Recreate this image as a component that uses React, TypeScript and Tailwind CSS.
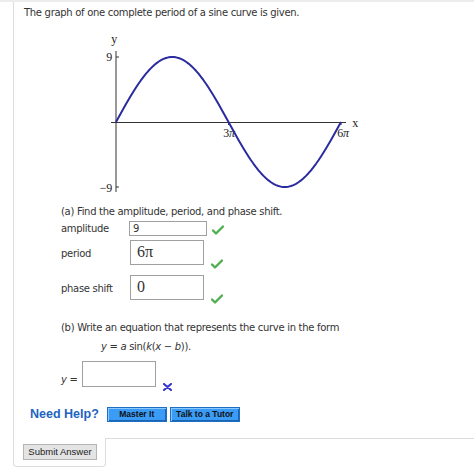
const curve = (() => {
  const pts: string[] = []
  for (let i = 0; i <= 90; i++) {
    const x = 21 + (225 * i) / 90
    const y = 92 - 65 * Math.sin((2 * Math.PI * i) / 90)
    pts.push(`${i === 0 ? 'M' : 'L'}${x.toFixed(2)},${y.toFixed(2)}`)
  }
  return pts.join(' ')
})()

function SineGraph() {
  return (
    <svg width="270" height="166" viewBox="0 0 270 166" className="block ml-[81px] mt-[10px]">
      <g fontFamily="'Liberation Serif', serif" fontSize="12" fill="#222">
        <text x="19" y="13" textAnchor="middle">y</text>
        <text x="17" y="31" textAnchor="end">9</text>
        <text x="17" y="162" textAnchor="end">−9</text>
        <text x="260" y="97" textAnchor="middle">x</text>
        <text x="134" y="107" textAnchor="middle">
          3<tspan fontStyle="italic">π</tspan>
        </text>
        <text x="248" y="107" textAnchor="middle">
          6<tspan fontStyle="italic">π</tspan>
        </text>
      </g>
      <g stroke="#333" strokeWidth="1">
        <line x1="21" y1="21" x2="21" y2="162" />
        <line x1="16" y1="92.5" x2="251" y2="92.5" />
        <line x1="21" y1="27" x2="24" y2="27" />
        <line x1="21" y1="157" x2="24" y2="157" />
        <line x1="133.5" y1="92" x2="133.5" y2="95" />
        <line x1="246" y1="92" x2="246" y2="95" />
      </g>
      <path d={curve} fill="none" stroke="#2b2ba0" strokeWidth="2" strokeLinejoin="round" />
    </svg>
  )
}

function Check() {
  return (
    <svg width="12" height="10" viewBox="0 0 12 10" className="block">
      <path d="M1 5.5 L4 8.5 L11 1.5" fill="none" stroke="#4fae4f" strokeWidth="2.4" strokeLinecap="round" strokeLinejoin="round" />
    </svg>
  )
}

function Cross() {
  return (
    <svg width="9" height="8" viewBox="0 0 9 8" className="block">
      <path d="M1 1 L8 7 M8 1 L1 7" stroke="#3838cc" strokeWidth="2.2" strokeLinecap="round" />
    </svg>
  )
}

export default function App() {
  return (
    <div className="w-[474px] h-[471px] bg-white overflow-hidden font-['DejaVu_Sans',sans-serif] text-[#333] text-[10px] tracking-[-0.3px]">
      <div className="h-[2px] bg-[#ececec]" />
      <div className="ml-[13px] h-[436px] border-l border-[#dddddd] flex flex-col">
        <p className="ml-[10px] mt-[4px] leading-[14px]">The graph of one complete period of a sine curve is given.</p>

        <SineGraph />

        <div className="ml-[47px] flex flex-col">
          <p className="mt-[9px] leading-[14px]">(a) Find the amplitude, period, and phase shift.</p>

          <div className="mt-[2px] flex items-center h-[15px]">
            <span className="w-[68px] leading-[14px]">amplitude</span>
            <div className="w-[78px] h-[15px] border border-[#a0a0a0] px-[3px] text-[10px] leading-[13px]">9</div>
            <div className="ml-[5px] mt-[2px]">
              <Check />
            </div>
          </div>

          <div className="mt-[4px] flex items-start h-[25px]">
            <span className="w-[69px] mt-[7px] leading-[14px]">period</span>
            <div className="w-[74px] h-[25px] border border-[#a0a0a0] pl-[6px] font-['Liberation_Serif',serif] text-[16px] leading-[21px] tracking-normal">
              6π
            </div>
            <div className="ml-[7px] mt-[19px]">
              <Check />
            </div>
          </div>

          <div className="mt-[10px] flex items-start h-[25px]">
            <span className="w-[69px] mt-[7px] leading-[14px]">phase shift</span>
            <div className="w-[74px] h-[25px] border border-[#a0a0a0] pl-[6px] font-['Liberation_Serif',serif] text-[16px] leading-[21px] tracking-normal">
              0
            </div>
            <div className="ml-[7px] mt-[19px]">
              <Check />
            </div>
          </div>

          <p className="mt-[21px] leading-[14px]">(b) Write an equation that represents the curve in the form</p>
          <p className="mt-[5px] ml-[40px] leading-[14px]">
            <i>y</i> = <i>a</i> sin(<i>k</i>(<i>x</i> − <i>b</i>)).
          </p>

          <div className="mt-[7px] flex items-start h-[26px]">
            <span className="w-[21px] mt-[12px] leading-[14px]">
              <i>y</i> =
            </span>
            <div className="w-[74px] h-[26px] border border-[#a0a0a0]" />
            <div className="ml-[7px] mt-[22px]">
              <Cross />
            </div>
          </div>
        </div>

        <div className="ml-[16px] mt-[19px] flex items-center tracking-normal">
          <span className="font-['Liberation_Sans',sans-serif] font-bold text-[12.5px] text-[#1d63bf] leading-[16px]">Need Help?</span>
          <button className="ml-[8px] w-[60px] h-[15px] bg-[#3a9cf7] border border-[#1d6fc6] shadow-[inset_1px_1px_0_#8cc8ff,inset_-1px_-1px_0_#1a64b0] font-['Liberation_Sans',sans-serif] font-bold text-[8.5px] text-[#111] leading-[13px]">
            Master It
          </button>
          <button className="ml-[3px] w-[70px] h-[15px] bg-[#3a9cf7] border border-[#1d6fc6] shadow-[inset_1px_1px_0_#8cc8ff,inset_-1px_-1px_0_#1a64b0] font-['Liberation_Sans',sans-serif] font-bold text-[8.5px] text-[#111] leading-[13px]">
            Talk to a Tutor
          </button>
        </div>
      </div>

      <div className="flex items-start">
        <div className="ml-[13px] w-[93px] h-[29px] border-l border-r border-b border-[#dddddd] rounded-b-[4px] pl-[9px] pt-[6px]">
          <button className="w-[74px] h-[16px] bg-[#e4e4e4] border border-[#b5b5b5] font-['Liberation_Sans',sans-serif] text-[9.5px] text-[#222] leading-[14px] tracking-normal">
            Submit Answer
          </button>
        </div>
        <div className="flex-1 border-t border-[#dddddd]" />
      </div>
    </div>
  )
}
